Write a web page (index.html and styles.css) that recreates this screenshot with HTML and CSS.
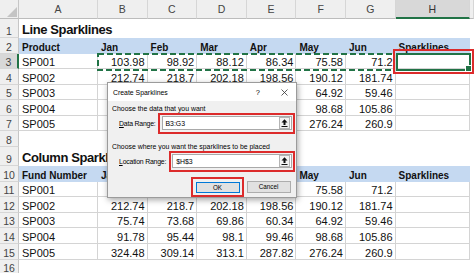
FILE: index.html
```html
<!DOCTYPE html>
<html>
<head>
    <title>Line Sparklines</title>
    <link rel="stylesheet" href="styles.css">
</head>
<body>
    <div class="sheet">
        <div class="corner">
            <svg width="10" height="10" viewBox="0 0 10 10"><polygon points="10,0 10,10 0,10" fill="#c4c4c4"/></svg>
        </div>
        <div class="ch">A</div>
        <div class="ch">B</div>
        <div class="ch">C</div>
        <div class="ch">D</div>
        <div class="ch">E</div>
        <div class="ch">F</div>
        <div class="ch">G</div>
        <div class="ch sel">H</div>
        <div class="ch"></div>

        <div class="rh">1</div>
        <div class="title">Line Sparklines</div>

        <div class="rh">2</div>
        <div class="hd">Product</div>
        <div class="hd">Jan</div>
        <div class="hd">Feb</div>
        <div class="hd">Mar</div>
        <div class="hd">Apr</div>
        <div class="hd">May</div>
        <div class="hd">Jun</div>
        <div class="hd">Sparklines</div>

        <div class="rh sel">3</div>
        <div class="c">SP001</div>
        <div class="n">103.98</div>
        <div class="n">98.92</div>
        <div class="n">88.12</div>
        <div class="n">86.34</div>
        <div class="n">75.58</div>
        <div class="n">71.2</div>
        <div class="c"></div>

        <div class="rh">4</div>
        <div class="c">SP002</div>
        <div class="n">212.74</div>
        <div class="n">218.7</div>
        <div class="n">202.18</div>
        <div class="n">198.56</div>
        <div class="n">190.12</div>
        <div class="n">181.74</div>
        <div class="c"></div>

        <!-- B:E of rows 5-7 and 11 sit under the dialog -->
        <div class="rh">5</div>
        <div class="c">SP003</div>
        <div class="n"></div>
        <div class="n"></div>
        <div class="n"></div>
        <div class="n"></div>
        <div class="n">64.92</div>
        <div class="n">59.46</div>
        <div class="c"></div>

        <div class="rh">6</div>
        <div class="c">SP004</div>
        <div class="n"></div>
        <div class="n"></div>
        <div class="n"></div>
        <div class="n"></div>
        <div class="n">98.68</div>
        <div class="n">105.86</div>
        <div class="c"></div>

        <div class="rh">7</div>
        <div class="c">SP005</div>
        <div class="n"></div>
        <div class="n"></div>
        <div class="n"></div>
        <div class="n"></div>
        <div class="n">276.24</div>
        <div class="n">260.9</div>
        <div class="c"></div>

        <div class="rh">8</div>

        <div class="rh">9</div>
        <div class="title">Column Sparklines</div>

        <div class="rh">10</div>
        <div class="hd">Fund Number</div>
        <div class="hd">Jan</div>
        <div class="hd"></div>
        <div class="hd"></div>
        <div class="hd"></div>
        <div class="hd">May</div>
        <div class="hd">Jun</div>
        <div class="hd">Sparklines</div>

        <div class="rh">11</div>
        <div class="c">SP001</div>
        <div class="n"></div>
        <div class="n"></div>
        <div class="n"></div>
        <div class="n"></div>
        <div class="n">75.58</div>
        <div class="n">71.2</div>
        <div class="c"></div>

        <div class="rh">12</div>
        <div class="c">SP002</div>
        <div class="n">212.74</div>
        <div class="n">218.7</div>
        <div class="n">202.18</div>
        <div class="n">198.56</div>
        <div class="n">190.12</div>
        <div class="n">181.74</div>
        <div class="c"></div>

        <div class="rh">13</div>
        <div class="c">SP003</div>
        <div class="n">75.74</div>
        <div class="n">73.68</div>
        <div class="n">69.86</div>
        <div class="n">60.34</div>
        <div class="n">64.92</div>
        <div class="n">59.46</div>
        <div class="c"></div>

        <div class="rh">14</div>
        <div class="c">SP004</div>
        <div class="n">91.78</div>
        <div class="n">95.44</div>
        <div class="n">98.1</div>
        <div class="n">99.46</div>
        <div class="n">98.68</div>
        <div class="n">105.86</div>
        <div class="c"></div>

        <div class="rh">15</div>
        <div class="c">SP005</div>
        <div class="n">324.48</div>
        <div class="n">309.14</div>
        <div class="n">313.1</div>
        <div class="n">287.82</div>
        <div class="n">276.24</div>
        <div class="n">260.9</div>
        <div class="c"></div>

        <div class="rh">16</div>

        <!-- range picked in the dialog -->
        <svg class="marquee" width="300" height="20" viewBox="0 0 300 20">
            <rect x="1" y="1" width="296" height="16" fill="none" stroke="#217346" stroke-width="2" stroke-dasharray="6 3"/>
        </svg>
        <div class="callout"></div>
        <div class="active"></div>

        <div class="dialog">
            <div class="dlg-title">
                <span class="dlg-name">Create Sparklines</span>
                <span class="dlg-help">?</span>
                <svg width="7" height="7" viewBox="0 0 7 7"><path d="M0.5 0.5 6.5 6.5M6.5 0.5 0.5 6.5" stroke="#333" stroke-width="0.8"/></svg>
            </div>
            <div class="dlg-body">
                <div class="dlg-label">Choose the data that you want</div>
                <div class="dlg-row">
                    <label><u>D</u>ata Range:</label>
                    <div class="mark">
                        <div class="range">
                            <span>B3:G3</span>
                            <span class="collapse">
                                <svg width="7" height="8" viewBox="0 0 7 8"><path d="M3.5 0.3 6.5 3.5H4.5V6H2.5V3.5H0.5Z" fill="#111"/><rect x="0.5" y="7" width="6" height="1" fill="#111"/></svg>
                            </span>
                        </div>
                    </div>
                </div>
                <div class="dlg-label gap">Choose where you want the sparklines to be placed</div>
                <div class="dlg-row">
                    <label><u>L</u>ocation Range:</label>
                    <div class="mark">
                        <div class="range">
                            <span>$H$3</span>
                            <span class="collapse">
                                <svg width="7" height="8" viewBox="0 0 7 8"><path d="M3.5 0.3 6.5 3.5H4.5V6H2.5V3.5H0.5Z" fill="#111"/><rect x="0.5" y="7" width="6" height="1" fill="#111"/></svg>
                            </span>
                        </div>
                    </div>
                </div>
                <div class="dlg-buttons">
                    <div class="mark">
                        <button class="btn default">OK</button>
                    </div>
                    <button class="btn">Cancel</button>
                </div>
            </div>
        </div>
    </div>
</body>
</html>
```

FILE: styles.css
```css
* {
    box-sizing: border-box;
}

body {
    margin: 0;
    width: 474px;
    height: 273px;
    overflow: hidden;
    background: #fff;
    font-family: "Liberation Sans", Arial, sans-serif;
    color: #111;
}

.sheet {
    position: relative;
    display: grid;
    grid-template-columns: 19px 79px repeat(6, 49.6px) 74.4px 1fr;
    grid-template-rows: 19px 19px repeat(7, 15.5px) 19.5px repeat(7, 15.6px);
    font-size: 11px;
}

.corner, .ch, .rh {
    background: #efefef;
    color: #444;
}

.corner {
    display: flex;
    align-items: flex-end;
    justify-content: flex-end;
    padding: 0 1px 1px 0;
    border-right: 1px solid #c6c6c6;
    border-bottom: 1px solid #bcbcbc;
}

.ch {
    display: flex;
    align-items: center;
    justify-content: center;
    font-size: 10.5px;
    border-right: 1px solid #d6d6d6;
    border-bottom: 1px solid #bcbcbc;
}

.ch.sel {
    background: #d8d8d8;
    color: #333;
    border-bottom: 2px solid #217346;
}

.rh {
    grid-column: 1;
    display: flex;
    align-items: flex-end;
    justify-content: center;
    font-size: 10.5px;
    border-right: 1px solid #c6c6c6;
    border-bottom: 1px solid #d6d6d6;
}

.rh.sel {
    background: #d8d8d8;
    border-right: 2px solid #217346;
}

.title {
    grid-column: 2 / -1;
    display: flex;
    align-items: flex-end;
    padding: 0 0 1px 3px;
    font-size: 13px;
    font-weight: bold;
    letter-spacing: -0.4px;
    white-space: nowrap;
}

.hd {
    display: flex;
    align-items: flex-end;
    padding: 0 0 1px 3px;
    background: #c5d9f1;
    font-size: 10px;
    font-weight: bold;
    white-space: nowrap;
}

.c, .n {
    display: flex;
    align-items: flex-end;
    padding: 0 2px 0 3px;
    border-right: 1px solid #d4d4d4;
    border-bottom: 1px solid #d4d4d4;
}

.n {
    justify-content: flex-end;
}

.marquee {
    position: absolute;
    left: 97px;
    top: 52.5px;
}

.active {
    position: absolute;
    left: 395.5px;
    top: 52.5px;
    width: 75.5px;
    height: 18px;
    border: 2px solid #217346;
}

.active::after {
    content: "";
    position: absolute;
    right: -3px;
    bottom: -3px;
    width: 5px;
    height: 5px;
    background: #217346;
    border: 1px solid #fff;
}

.callout {
    position: absolute;
    left: 393px;
    top: 49px;
    width: 81px;
    height: 24.5px;
    border: 2.5px solid #dc2b2b;
}

.dialog {
    position: absolute;
    left: 107px;
    top: 82px;
    width: 190px;
    background: #f0f0f0;
    border: 1px solid #9b9b9b;
    box-shadow: 1px 2px 6px rgba(0,0,0,0.35);
    font-size: 6.9px;
    color: #000;
}

.dlg-title {
    display: flex;
    align-items: center;
    height: 18px;
    padding: 0 8px 0 5px;
    background: #fff;
}

.dlg-name {
    flex: 1;
}

.dlg-help {
    margin-right: 21px;
    font-size: 7.5px;
}

.dlg-body {
    padding: 2.5px 1px 0 4px;
}

.dlg-label {
    line-height: 9px;
    white-space: nowrap;
}

.dlg-label.gap {
    margin-top: 8px;
}

.dlg-row {
    display: flex;
    align-items: center;
    padding-left: 7px;
}

.dlg-row label {
    margin-right: 2.5px;
    letter-spacing: -0.2px;
    white-space: nowrap;
}

.mark {
    border: 2px solid #dc2b2b;
    padding: 1.5px;
}

.dlg-row .mark {
    flex: 1;
}

.range {
    display: flex;
    align-items: center;
    height: 14px;
    padding: 0 1px 0 3px;
    background: #fff;
    border: 1px solid #a9a9a9;
}

.range span {
    flex: 1;
}

.range .collapse {
    flex: none;
    display: flex;
    align-items: center;
    justify-content: center;
    width: 11px;
    height: 12px;
    background: #f2f2f2;
    border: 1px solid #b4b4b4;
}

.dlg-buttons {
    display: flex;
    align-items: center;
    justify-content: flex-end;
    gap: 2.5px;
    margin-top: 5px;
    padding-right: 4.5px;
}

.dlg-buttons .mark {
    padding: 3px 2.5px 2px 3px;
}

.btn {
    width: 44px;
    height: 11.6px;
    padding: 0;
    font-family: inherit;
    font-size: 6.3px;
    color: #000;
    background: #e1e1e1;
    border: 1px solid #adadad;
}

.btn.default {
    border-color: #0078d7;
}
```
